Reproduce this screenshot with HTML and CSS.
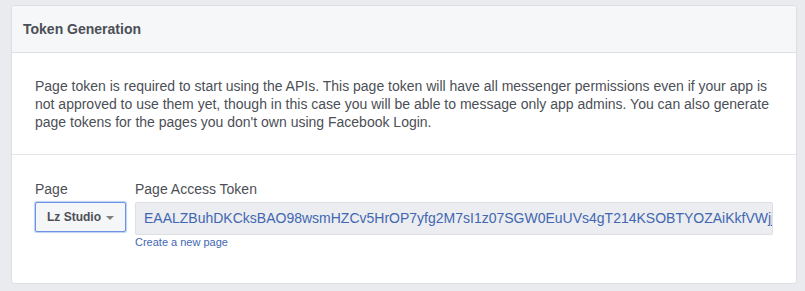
FILE: index.html
```html
<!DOCTYPE html>
<html>
<head>
<meta charset="utf-8">
<link rel="stylesheet" href="styles.css">
</head>
<body>
<div class="card">
  <div class="card-header">Token Generation</div>
  <div class="section">
    <p class="desc">Page token is required to start using the APIs. This page token will have all messenger permissions even if your app is not approved to use them yet, though in this case you will be able to message only app admins. You can also generate page tokens for the pages you don't own using Facebook Login.</p>
  </div>
  <div class="section section-form">
    <div class="field field-page">
      <div class="label">Page</div>
      <button class="select">Lz Studio <span class="caret"></span></button>
    </div>
    <div class="field field-token">
      <div class="label">Page Access Token</div>
      <div class="token">EAALZBuhDKCksBAO98wsmHZCv5HrOP7yfg2M7sI1z07SGW0EuUVs4gT214KSOBTYOZAiKkfVWjjZBqK4pQx</div>
      <a class="link">Create a new page</a>
    </div>
  </div>
</div>
</body>
</html>
```
FILE: styles.css
```css
html, body {
  margin: 0;
  padding: 0;
}
body {
  background: #e9ebee;
  font-family: "Liberation Sans", Arial, Helvetica, sans-serif;
  color: #4b4f56;
  padding: 5px 8px 7px 11px;
}
.card {
  background: #fff;
  border: 1px solid #dddfe2;
  border-radius: 3px;
  height: 277px;
  overflow: hidden;
}
.card-header {
  background: #f6f7f9;
  border-bottom: 1px solid #dddfe2;
  height: 46px;
  line-height: 46px;
  padding-left: 11px;
  font-size: 14px;
  font-weight: bold;
  color: #4b4f56;
}
.section {
  padding: 24px 23px 23px 23px;
  border-bottom: 1px solid #e5e5e5;
}
.desc {
  margin: 0;
  font-size: 14px;
  line-height: 18px;
  color: #4b4f56;
}
.section-form {
  border-bottom: none;
  display: flex;
  gap: 9px;
  padding-top: 25px;
  padding-right: 23px;
}
.label {
  font-size: 14px;
  line-height: 18px;
  margin-bottom: 4px;
  color: #4b4f56;
}
.select {
  box-sizing: border-box;
  width: 91px;
  height: 30px;
  background: #f5f6f7;
  border: 1px solid #6d94e3;
  box-shadow: 0 0 1px 1px #bcd0f7;
  border-radius: 2px;
  font-family: "Liberation Sans", Arial, sans-serif;
  font-size: 12px;
  font-weight: bold;
  color: #4b4f56;
  padding: 0;
  display: flex;
  align-items: center;
  justify-content: center;
  gap: 5px;
}
.caret {
  width: 0;
  height: 0;
  border-left: 4px solid transparent;
  border-right: 4px solid transparent;
  border-top: 4px solid #7f7f7f;
  margin-top: 1px;
}
.field-token {
  flex: 1;
  min-width: 0;
}
.token {
  box-sizing: border-box;
  height: 33px;
  line-height: 31px;
  background: #ebedf0;
  border: 1px solid #dddfe2;
  border-radius: 2px;
  padding-left: 8px;
  font-size: 14px;
  color: #4267b2;
  white-space: nowrap;
  overflow: hidden;
}
.link {
  display: block;
  font-size: 11px;
  line-height: 14px;
  color: #4267b2;
  margin-top: 0;
}
```
